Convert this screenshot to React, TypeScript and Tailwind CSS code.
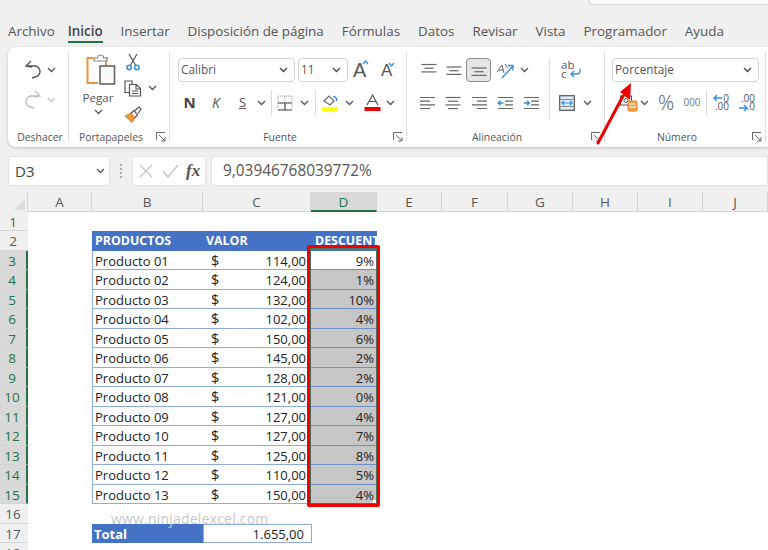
import React from "react";

const Chev = ({ c = "#555" }: { c?: string }) => (
  <svg width="9" height="6" viewBox="0 0 9 6" fill="none"><path d="M1 1l3.5 3.5L8 1" stroke={c} strokeWidth="1.3" /></svg>
);
const Launcher = () => (
  <svg width="10" height="10" viewBox="0 0 10 10" fill="none" stroke="#666" strokeWidth="1"><path d="M.5 8V.5h8.5M3 3l5.5 5.5M9 5v4H5" /></svg>
);
const LeftLines = () => (
  <svg width="16" height="14" viewBox="0 0 16 14" fill="none"><path d="M0 1.5h15M0 5.2h10M0 8.9h15M0 12.5h10" stroke="#666" strokeWidth="1.2" /></svg>
);
const RightLines = () => (
  <svg width="16" height="14" viewBox="0 0 16 14" fill="none"><path d="M1 1.5h15M6 5.2h10M1 8.9h15M6 12.5h10" stroke="#666" strokeWidth="1.2" /></svg>
);
const CenterLines = ({ y, widths }: { y: number; widths: number[] }) => (
  <svg width="16" height="14" viewBox="0 0 16 14" fill="none">
    {widths.map((w, i) => <line key={i} x1={8 - w / 2} x2={8 + w / 2} y1={y + i * 3.7} y2={y + i * 3.7} stroke="#666" strokeWidth="1.2" />)}
  </svg>
);
const Indent = ({ dir }: { dir: "l" | "r" }) => (
  <svg width="16" height="14" viewBox="0 0 16 14" fill="none">
    <path d="M1 1.5h15M8 5.2h8M8 8.9h8M1 12.5h15" stroke="#666" strokeWidth="1.2" />
    {dir === "l"
      ? <path d="M6.5 7H1M3.5 4.8L1 7l2.5 2.2" stroke="#2f8fd8" strokeWidth="1.3" />
      : <path d="M1 7h5.5M4 4.8L6.5 7 4 9.2" stroke="#2f8fd8" strokeWidth="1.3" />}
  </svg>
);
const Sep = () => <div className="w-px bg-[#d9d9d9] h-[25px]" />;

const Combo = ({ text, cls }: { text: string; cls: string }) => (
  <div className={`h-[24px] flex items-center justify-between pl-[2px] pr-[6px] bg-white border border-[#d4d4d4] rounded-[4px] text-[#555] text-[11.8px] ${cls}`}>
    <span>{text}</span>
    <Chev c="#444" />
  </div>
);

const Group = ({ cls, children, label, launcher, labelCls }: { cls: string; children: React.ReactNode; label: string; launcher?: boolean; labelCls?: string }) => (
  <div className={`relative shrink-0 h-[100px] flex flex-col ${cls}`}>
    <div className="h-[81px] flex flex-col">{children}</div>
    <div className={`h-[19px] flex items-center justify-center text-[10.4px] text-[#555] ${labelCls ?? ""}`}>{label}</div>
    {launcher && <div className="absolute right-[3px] bottom-[5px] leading-none"><Launcher /></div>}
  </div>
);
const GroupDivider = () => <div className="w-px h-[90px] mt-[5px] bg-[#dedede] shrink-0" />;
const Slot = ({ cls, children }: { cls: string; children: React.ReactNode }) => <div className={`flex items-center justify-center shrink-0 ${cls}`}>{children}</div>;

const rows: [string, string, string][] = [
  ["Producto 01", "114,00", "9%"], ["Producto 02", "124,00", "1%"], ["Producto 03", "132,00", "10%"],
  ["Producto 04", "102,00", "4%"], ["Producto 05", "150,00", "6%"], ["Producto 06", "145,00", "2%"],
  ["Producto 07", "128,00", "2%"], ["Producto 08", "121,00", "0%"], ["Producto 09", "127,00", "4%"],
  ["Producto 10", "127,00", "7%"], ["Producto 11", "125,00", "8%"], ["Producto 12", "110,00", "5%"],
  ["Producto 13", "150,00", "4%"],
];
const cols = ["A", "B", "C", "D", "E", "F", "G", "H", "I", "J"];
const gridCls = "grid grid-cols-[28px_64px_111px_108px_66px_65px_66px_65px_65px_65px_65px] grid-rows-[19.5px] h-[19.5px] leading-[16px]";

const RowHead = ({ n, on }: { n: number; on?: boolean }) => (
  <div className={`flex items-center justify-center pr-[2px] pt-[2px] text-[13.5px] border-b border-[#d4d4d4] ${on ? "bg-[#d9d9d9] text-[#217346] border-r-2 border-r-[#217346]" : "bg-[#f0f0f0] text-[#555]"}`}>{n}</div>
);

export default function App() {
  return (
    <div className="relative w-[768px] h-[550px] overflow-hidden bg-[#f0f0f0] font-['Open_Sans','Noto_Sans',sans-serif]">
      <div className="h-[5px] flex justify-end">
        <div className="w-[179px] h-[5px] bg-[#fafafa] border-l border-b border-[#d8d8d8] rounded-bl-[3px]" />
      </div>
      <div className="h-[42px] pl-[8px] flex items-start gap-[18px] text-[13.4px] text-[#555] pt-[16px] whitespace-nowrap">
        <span>Archivo</span>
        <span className="relative -ml-[5px] font-semibold text-[#444]">Inicio<span className="absolute left-0 right-0 top-[20px] h-[2px] bg-[#217346]" /></span>
        <span>Insertar</span>
        <span>Disposición de página</span>
        <span>Fórmulas</span>
        <span>Datos</span>
        <span>Revisar</span>
        <span>Vista</span>
        <span>Programador</span>
        <span>Ayuda</span>
      </div>

      {/* Ribbon */}
      <div className="ml-[8px] h-[100px] bg-white rounded-l-[8px] shadow-[0_1px_3px_rgba(0,0,0,0.2)] flex">
        <Group cls="w-[60px]" label="Deshacer" labelCls="pl-[4px]">
          <div className="h-[40px] pt-[5px] pl-[16px] flex items-center gap-[5px]">
            <svg width="18" height="20" viewBox="0 0 18 20" fill="none" stroke="#555" strokeWidth="1.4"><path d="M7 1L2 6l6 1M2 6h8a5.5 5.5 0 0 1 1 11l-3 1" /></svg>
            <Chev />
          </div>
          <div className="h-[26px] pl-[16px] flex items-center gap-[5px]">
            <svg width="18" height="20" viewBox="0 0 18 20" fill="none" stroke="#bdbdbd" strokeWidth="1.4"><path d="M11 1l5 5-6 1M16 6H8a5.5 5.5 0 0 0-1 11l3 1" /></svg>
            <Chev c="#c4c4c4" />
          </div>
        </Group>
        <GroupDivider />
        <Group cls="w-[100px]" label="Portapapeles" launcher labelCls="pr-[16px]">
          <div className="flex h-[81px]">
            <div className="w-[52px] flex flex-col items-center pl-[6px] pt-[7px]">
              <svg className="ml-[6px]" width="30" height="31" viewBox="0 0 30 31" fill="none">
                <path d="M7 4H1.5v25H12" stroke="#e6953c" strokeWidth="2" fill="#fff" />
                <path d="M22 4h-2v8" stroke="#e6953c" strokeWidth="2" />
                <path d="M8 7V4h3.5a3 3 0 0 1 6 0H21v3z" stroke="#888" strokeWidth="1.2" fill="#fff" />
                <rect x="14" y="12" width="14.5" height="18" fill="#fafafa" stroke="#666" strokeWidth="1.6" />
              </svg>
              <span className="text-[11.6px] text-[#555] mt-[5px] leading-[16px]">Pegar</span>
              <div className="mt-[3px] leading-none"><Chev /></div>
            </div>
            <div className="flex flex-col pt-[2px]">
              <Slot cls="w-[24px] h-[26px]">
                <svg width="14" height="18" viewBox="0 0 14 18" fill="none"><path d="M3 1l6.5 11M11 1L4.5 12" stroke="#555" strokeWidth="1.2" /><circle cx="3.2" cy="14.5" r="2.2" stroke="#2f8fd8" strokeWidth="1.5" /><circle cx="10.8" cy="14.5" r="2.2" stroke="#2f8fd8" strokeWidth="1.5" /></svg>
              </Slot>
              <div className="h-[26px] flex items-center">
                <Slot cls="w-[24px]">
                  <svg width="18" height="17" viewBox="0 0 18 17" fill="none" stroke="#555" strokeWidth="1.2"><path d="M6 12.5H1V1h7v3" /><path d="M5.5 4.5h7l4 4V16h-11zM12 4.5V9h4.5M8 11h6M8 13.5h6" /></svg>
                </Slot>
                <div className="ml-[3px] leading-none"><Chev /></div>
              </div>
              <Slot cls="w-[24px] h-[26px]">
                <svg width="18" height="17" viewBox="0 0 18 17" fill="none"><path d="M1 10l6-3 4 5-3 4.5z" fill="#e99a43" stroke="#d9822b" /><path d="M7 7.5l3-3 3.5 4.5-3 3" stroke="#555" strokeWidth="1.2" /><path d="M11 4.5l4-3.5 2 2-3 4.5" stroke="#555" strokeWidth="1.2" /></svg>
              </Slot>
            </div>
          </div>
        </Group>
        <GroupDivider />
        <Group cls="w-[236px]" label="Fuente" launcher labelCls="pr-[16px]">
          <div className="flex items-center pl-[8px] pt-[11px] h-[35px] gap-[3px]">
            <Combo text="Calibri" cls="w-[117px]" />
            <Combo text="11" cls="w-[50px]" />
            <div className="w-[25px] font-['Liberation_Sans',sans-serif] text-left pl-[2px] relative text-[20px] leading-none text-[#555]">A<span className="absolute right-[7px] top-0 leading-none"><svg width="7" height="5" viewBox="0 0 7 5" fill="none"><path d="M1 4l2.5-3L6 4" stroke="#2f8fd8" strokeWidth="1.3" /></svg></span></div>
            <div className="w-[25px] font-['Liberation_Sans',sans-serif] text-left pl-[2px] relative text-[17px] leading-none text-[#555]">A<span className="absolute right-[9px] top-0 leading-none"><svg width="7" height="5" viewBox="0 0 7 5" fill="none"><path d="M1 1l2.5 3L6 1" stroke="#2f8fd8" strokeWidth="1.3" /></svg></span></div>
          </div>
          <div className="flex items-center h-[36px] pt-[5px] pl-[7px]">
            <Slot cls="w-[25px] text-[15px] font-bold text-[#444]">N</Slot>
            <Slot cls="w-[28px] text-[14px] italic text-[#555]">K</Slot>
            <Slot cls="w-[25px] text-[13px] text-[#555] underline">S</Slot>
            <Slot cls="w-[12px]"><Chev /></Slot>
            <Slot cls="w-[8px]"><Sep /></Slot>
            <Slot cls="w-[20px]"><svg width="16" height="16" viewBox="0 0 16 16" fill="none"><path d="M1 1h14v14H1zM8 1v14M1 8h14" stroke="#999" strokeWidth="1" strokeDasharray="1 1" /><path d="M1 15h14M8 8v7M1 8h14" stroke="#555" strokeWidth="1.2" /></svg></Slot>
            <Slot cls="w-[18px]"><Chev /></Slot>
            <Slot cls="w-[4px]"><Sep /></Slot>
            <Slot cls="w-[26px]"><svg width="17" height="17" viewBox="0 0 17 17" fill="none"><path d="M2 7l5-5 5 5-4 4z" stroke="#666" strokeWidth="1.2" /><path d="M11 2.5c3 0 4 2 3.5 4.5" stroke="#2f8fd8" strokeWidth="1.5" /><rect x="0" y="13" width="16" height="4" fill="#ffff00" /></svg></Slot>
            <Slot cls="w-[12px]"><Chev /></Slot>
            <Slot cls="w-[24px] ml-[5px]"><svg width="17" height="17" viewBox="0 0 17 17" fill="none"><path d="M3 11L8.5 1 14 11M5 7.5h7" stroke="#555" strokeWidth="1.2" /><rect x="0.5" y="13" width="16" height="4" fill="#f00000" /></svg></Slot>
            <Slot cls="w-[12px]"><Chev /></Slot>
          </div>
        </Group>
        <GroupDivider />
        <Group cls="w-[197px]" label="Alineación" launcher labelCls="pr-[17px]">
          <div className="flex h-[81px]">
            <div className="w-[142px] shrink-0 flex flex-col">
              <div className="flex items-center pl-[9px] pt-[11px] h-[35px]">
                <Slot cls="w-[25px]"><CenterLines y={1.5} widths={[15, 9, 15]} /></Slot>
                <Slot cls="w-[25px]"><CenterLines y={4} widths={[15, 9, 15]} /></Slot>
                <Slot cls="w-[25px] h-[24px] bg-[#e6e6e6] border border-[#8c8c8c] rounded-[4px]"><CenterLines y={5} widths={[15, 9, 15]} /></Slot>
                <Slot cls="w-[28px]"><svg width="18" height="17" viewBox="0 0 18 17" fill="none"><path d="M6 16L17 4M12 3.5h5v5" stroke="#2f8fd8" strokeWidth="1.3" /><path d="M1 10l5-7 2 8M3 8.5l4-1M9 2l2.5 4" stroke="#666" strokeWidth="1" /></svg></Slot>
                <Slot cls="w-[10px]"><Chev /></Slot>
              </div>
              <div className="flex items-center pl-[13px] pt-[5px] h-[36px]">
                <Slot cls="w-[25px] justify-start"><LeftLines /></Slot>
                <Slot cls="w-[26px] justify-start"><CenterLines y={1.5} widths={[15, 10, 15, 10]} /></Slot>
                <Slot cls="w-[26px] justify-start"><RightLines /></Slot>
                <Slot cls="w-[26px] justify-start"><Indent dir="l" /></Slot>
                <Slot cls="w-[20px] justify-start"><Indent dir="r" /></Slot>
              </div>
            </div>
            <div className="w-px h-[63px] mt-[11px] bg-[#dedede] shrink-0" />
            <div className="flex-1 flex flex-col">
              <div className="flex items-center h-[35px] pt-[11px] pl-[11px]">
                <div className="relative w-[20px] h-[20px] text-[11.5px] leading-[9px] text-[#555]">ab<br />c<svg className="absolute right-0 bottom-[2px]" width="12" height="10" viewBox="0 0 12 10" fill="none"><path d="M11 0.5V3a3 3 0 0 1-3 3H2M5 3L2 6l3 3" stroke="#2f8fd8" strokeWidth="1.3" /></svg></div>
              </div>
              <div className="flex items-center h-[36px] pt-[5px] pl-[7px]">
                <Slot cls="w-[20px]"><svg width="16" height="16" viewBox="0 0 16 16" fill="none"><rect x="0.7" y="0.7" width="14.6" height="14.6" stroke="#555" strokeWidth="1.2" fill="#dcecf9" /><path d="M1 4.5h14M1 11.5h14" stroke="#888" /><path d="M3 8h10M5 6L3 8l2 2M11 6l2 2-2 2" stroke="#2f8fd8" strokeWidth="1.2" /></svg></Slot>
                <Slot cls="w-[20px]"><Chev /></Slot>
              </div>
            </div>
          </div>
        </Group>
        <GroupDivider />
        <Group cls="w-[160px]" label="Número" launcher labelCls="pr-[16px]">
          <div className="flex items-center pl-[7px] pt-[11px] h-[35px]"><Combo text="Porcentaje" cls="w-[147px]" /></div>
          <div className="flex items-center pl-[15px] pt-[5px] h-[36px]">
            <Slot cls="w-[18px]"><svg width="18" height="18" viewBox="0 0 18 18" fill="none"><rect x="0.5" y="2" width="11" height="9" stroke="#555" /><circle cx="6" cy="6.5" r="2" stroke="#555" /><rect x="8" y="7" width="9" height="10" rx="1" fill="#eea24c" stroke="#d9822b" /><path d="M9 10h7M9 13h7" stroke="#fff" /></svg></Slot>
            <Slot cls="w-[12px]"><Chev /></Slot>
            <Slot cls="w-[32px] text-[20px] font-light text-[#555] leading-none">%</Slot>
            <Slot cls="w-[20px] text-[10px] text-[#777]">000</Slot>
            <Slot cls="w-[8px]"><Sep /></Slot>
            <Slot cls="w-[22px]"><div className="relative w-[16px] h-[18px] text-[10px] leading-[8.5px] text-[#555] text-right">0<br />.00<svg className="absolute left-0 top-0" width="9" height="8" viewBox="0 0 9 8" fill="none"><path d="M9 4H1M4 1L1 4l3 3" stroke="#2f8fd8" strokeWidth="1.3" /></svg></div></Slot>
            <Slot cls="w-[30px]"><div className="relative w-[16px] h-[18px] text-[10px] leading-[8.5px] text-[#555] text-right">.00<br />.0<svg className="absolute left-0 bottom-0" width="9" height="8" viewBox="0 0 9 8" fill="none"><path d="M0 4h8M5 1l3 3-3 3" stroke="#2f8fd8" strokeWidth="1.3" /></svg></div></Slot>
          </div>
        </Group>
        <GroupDivider />
      </div>

      {/* Formula bar */}
      <div className="h-[30px] mt-[9px] pl-[8px] flex items-stretch">
        <div className="w-[102px] bg-white rounded-[3px] border border-[#e2e2e2] flex items-center justify-between pl-[6px] pr-[4px] text-[15px] text-[#444]">
          <span>D3</span><Chev />
        </div>
        <div className="w-[22px] flex items-center justify-center">
          <div className="flex flex-col gap-[2px]"><i className="block w-[2px] h-[2px] bg-[#aaa]" /><i className="block w-[2px] h-[2px] bg-[#aaa]" /><i className="block w-[2px] h-[2px] bg-[#aaa]" /><i className="block w-[2px] h-[2px] bg-[#aaa]" /></div>
        </div>
        <div className="w-[74px] bg-white rounded-[3px] border border-[#e2e2e2] flex items-center pl-[6px] gap-[9px]">
          <svg width="14" height="14" viewBox="0 0 14 14" fill="none" stroke="#c4c4c4" strokeWidth="1.3"><path d="M1 1l12 12M13 1L1 13" /></svg>
          <svg width="17" height="14" viewBox="0 0 17 14" fill="none" stroke="#c4c4c4" strokeWidth="1.3"><path d="M1 7l5 6L16 1" /></svg>
          <span className="font-['Liberation_Serif',serif] italic font-bold text-[17px] text-[#555] -ml-[2px]">fx</span>
        </div>
        <div className="flex-1 ml-[5px] bg-white rounded-l-[3px] border border-[#e2e2e2] flex items-center pl-[11px] text-[15.4px] text-[#555]">9,03946768039772%</div>
      </div>

      {/* Sheet */}
      <div className="relative mt-[6px] bg-white">
        <div className={`${gridCls} bg-[#f0f0f0]`}>
          <div className="relative border-r border-[#d4d4d4] overflow-hidden">
            <div className="absolute right-[2px] bottom-[2px] w-0 h-0 border-l-[11px] border-l-transparent border-b-[11px] border-b-[#dcdcdc]" />
          </div>
          {cols.map((c) => (
            <div key={c} className={`flex items-center justify-center pt-[2px] text-[13.5px] border-r ${c === "D" ? "bg-[#d9d9d9] text-[#217346] border-b-2 border-b-[#217346] border-r-[#d4d4d4]" : "text-[#555] border-r-[#d4d4d4] border-b border-b-[#d4d4d4]"}`}>{c}</div>
          ))}
        </div>

        <div className={gridCls}><RowHead n={1} /></div>
        <div className={gridCls}>
          <RowHead n={2} />
          <div />
          <div className="col-span-3 bg-[#4472c4] text-white font-bold text-[12.4px] pt-[1px] grid grid-cols-[111px_108px_66px] items-center overflow-hidden whitespace-nowrap">
            <span className="pl-[3px]">PRODUCTOS</span>
            <span className="pl-[3px]">VALOR</span>
            <span className="pl-[4px]">DESCUENTO</span>
          </div>
        </div>
        {rows.map((r, i) => (
          <div key={i} className={gridCls}>
            <RowHead n={i + 3} on />
            <div />
            <div className="flex items-center pl-[2px] pt-[2px] text-[13px] text-[#222] border-l border-b border-[#8faadc]">{r[0]}</div>
            <div className="flex items-center justify-between pl-[8px] pr-[5px] pt-[2px] text-[13px] text-[#222] border-b border-[#8faadc]"><span className="text-[14.5px]">$</span><span>{r[1]}</span></div>
            <div className={`flex items-center justify-end pr-[3px] pt-[2px] text-[13px] text-[#222] border-b border-[#6f8fc9] ${i === 0 ? "bg-white" : "bg-[#c6c6c6]"}`}>{r[2]}</div>
          </div>
        ))}
        <div className={gridCls}><RowHead n={16} /></div>
        <div className={gridCls}>
          <RowHead n={17} />
          <div />
          <div className="bg-[#4472c4] text-white font-bold text-[13px] flex items-center pl-[2px] pt-[2px]">Total</div>
          <div className="w-[109px] flex items-center justify-end pr-[7px] pt-[2px] text-[13px] text-[#222] border border-[#8faadc]">1.655,00</div>
        </div>
        <div className={gridCls}><RowHead n={18} /></div>

        {/* Selection + red highlight */}
        <div className="absolute left-[307px] top-[53px] w-[73px] h-[262px] border-[3px] border-[#f00000] rounded-[2px]">
          <div className="w-full h-full border border-[#4f6f5c]" />
          <div className="absolute right-[1px] bottom-[1px] w-[3px] h-[3px] bg-white" />
        </div>
        <div className="absolute left-[111px] top-[316px] text-[14px] tracking-[0.2px] text-[#c8c8c8] whitespace-nowrap">www.ninjadelexcel.com</div>
      </div>

      {/* Arrow */}
      <svg className="absolute left-[590px] top-[75px]" width="50" height="75" viewBox="0 0 50 75" fill="none">
        <path d="M8 68L33 21" stroke="#f00000" strokeWidth="3" strokeLinecap="round" />
        <path d="M41 8L30 17l10 8z" fill="#f00000" />
      </svg>
    </div>
  );
}
